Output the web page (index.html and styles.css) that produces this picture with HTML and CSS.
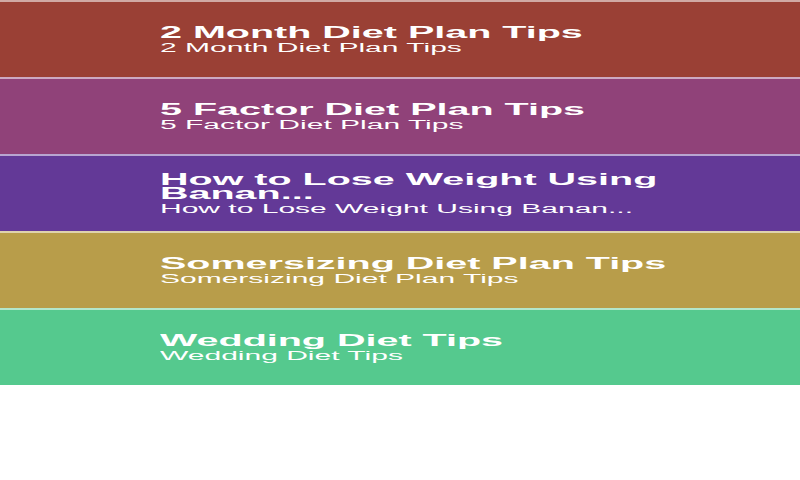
FILE: index.html
```html
<html>

<head>
    <meta charset="UTF-8">
    <meta name="viewport" content="width=device-width, initial-scale=1.0">
    <title>Diet Plan Tips</title>

    <link rel="stylesheet" href="styles.css">
</head>

<body>
    <div class="list">
        <div class="item red">
            <div class="text">
                <div class="title">2 Month Diet Plan Tips</div>
                <div class="sub">2 Month Diet Plan Tips</div>
            </div>
        </div>
        <div class="item plum">
            <div class="text">
                <div class="title">5 Factor Diet Plan Tips</div>
                <div class="sub">5 Factor Diet Plan Tips</div>
            </div>
        </div>
        <div class="item purple">
            <div class="text">
                <div class="title">How to Lose Weight Using Banan...</div>
                <div class="sub">How to Lose Weight Using Banan...</div>
            </div>
        </div>
        <div class="item gold">
            <div class="text">
                <div class="title">Somersizing Diet Plan Tips</div>
                <div class="sub">Somersizing Diet Plan Tips</div>
            </div>
        </div>
        <div class="item green">
            <div class="text">
                <div class="title">Wedding Diet Tips</div>
                <div class="sub">Wedding Diet Tips</div>
            </div>
        </div>
    </div>
</body>

</html>
```

FILE: styles.css
```css
* {
    box-sizing: border-box;
}

body {
    margin: 0;
    background-color: #ffffff;
    font-family: "Liberation Sans", Arial, sans-serif;
}

.item {
    height: 77px;
    border-top: 2px solid rgba(255, 255, 255, 0.55);
    padding-left: 160px;
    display: flex;
    align-items: center;
    color: #ffffff;
}

/* the text is drawn wide, so stretch it sideways */
.text {
    width: 230px;
    transform: scaleX(2.5);
    transform-origin: left center;
}

.title {
    font-size: 15.8px;
    font-weight: bold;
    line-height: 14px;
    margin-bottom: 2px;
}

.sub {
    font-size: 12px;
    line-height: 12px;
    white-space: nowrap;
}

.red {
    background-color: #9a4035;
}

.plum {
    background-color: #904279;
}

.purple {
    background-color: #633997;
}

.gold {
    background-color: #b89d4a;
}

.green {
    background-color: #55c98e;
}
```
